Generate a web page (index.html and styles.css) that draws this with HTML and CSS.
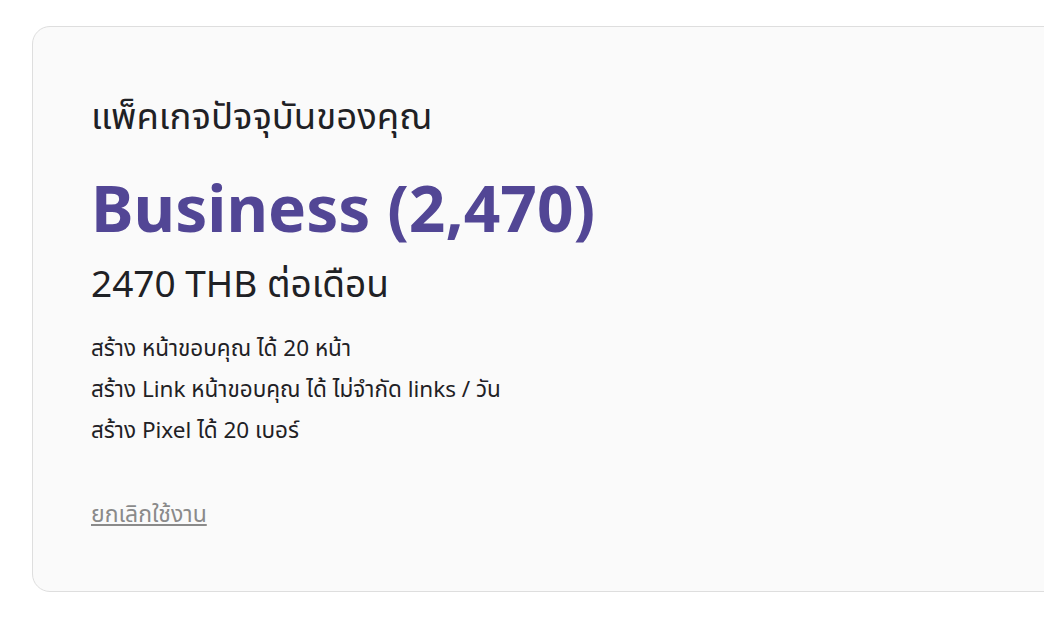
FILE: index.html
```html
<!DOCTYPE html>
<html lang="th">
<head>
<meta charset="utf-8">
<title>แพ็คเกจปัจจุบันของคุณ</title>
<link rel="stylesheet" href="styles.css">
</head>
<body>
<main class="page">
  <section class="card">
    <h2 class="card-title">แพ็คเกจปัจจุบันของคุณ</h2>
    <h1 class="plan-name">Business (2,470)</h1>
    <p class="plan-price">2470 THB ต่อเดือน</p>
    <ul class="features">
      <li>สร้าง หน้าขอบคุณ ได้ 20 หน้า</li>
      <li>สร้าง Link หน้าขอบคุณ ได้ ไม่จำกัด links / วัน</li>
      <li>สร้าง Pixel ได้ 20 เบอร์</li>
    </ul>
    <div class="card-actions">
      <a class="cancel" href="#">ยกเลิกใช้งาน</a>
    </div>
  </section>
</main>
</body>
</html>
```

FILE: styles.css
```css
html, body {
  margin: 0;
  padding: 0;
  background: #ffffff;
  overflow: hidden;
}
body {
  font-family: "Noto Sans", "Noto Sans Thai", "Noto Sans Thai UI", sans-serif;
  color: #1f2125;
}
.page {
  padding: 26px 0 0 32px;
}
.card {
  box-sizing: border-box;
  width: 1100px;
  height: 566px;
  background: #fafafa;
  border: 1px solid #dedede;
  border-radius: 18px;
  padding: 62px 58px 0 58px;
}
.card-title {
  margin: 0;
  font-size: 36.5px;
  font-weight: 400;
  line-height: 52px;
}
.plan-name {
  margin: 27px 0 0;
  font-size: 64px;
  font-weight: 700;
  line-height: 80px;
  color: #524695;
}
.plan-price {
  margin: 11px 0 0;
  font-size: 37px;
  font-weight: 400;
  line-height: 48px;
}
.features {
  list-style: none;
  margin: 20px 0 0;
  padding: 0;
  font-size: 22.5px;
  line-height: 41px;
}
.card-actions {
  margin-top: 47px;
  font-size: 23px;
  line-height: 32px;
}
.cancel {
  color: #8a8a8a;
  text-decoration: underline;
}
```
